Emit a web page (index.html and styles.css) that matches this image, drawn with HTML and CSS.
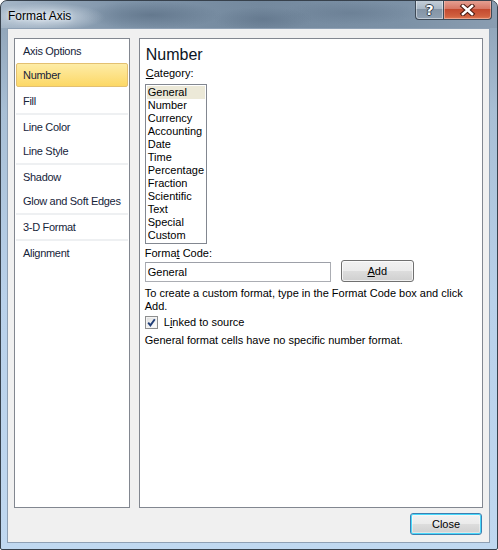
FILE: index.html
```html
<!DOCTYPE html>
<html>
<head>
<meta charset="utf-8">
<link rel="stylesheet" href="styles.css">
</head>
<body>
<div class="window">
  <div class="titlebar">
    <span class="title">Format Axis</span>
    <div class="caption-btns">
      <div class="cb help"><span class="q">?</span></div>
      <div class="cb close">
        <svg width="17" height="12" viewBox="0 0 17 12">
          <path d="M4 2 L13 10 M13 2 L4 10" stroke="#4a1a10" stroke-width="4.6" stroke-linecap="square" fill="none"/>
          <path d="M4 2 L13 10 M13 2 L4 10" stroke="#ffffff" stroke-width="2.6" stroke-linecap="square" fill="none"/>
        </svg>
      </div>
    </div>
  </div>
  <div class="client">
    <div class="panels">
      <ul class="nav">
        <li>Axis Options</li>
        <li class="sel">Number</li>
        <li>Fill</li>
        <li class="sep"></li>
        <li>Line Color</li>
        <li>Line Style</li>
        <li class="sep"></li>
        <li>Shadow</li>
        <li>Glow and Soft Edges</li>
        <li class="sep"></li>
        <li>3-D Format</li>
        <li class="sep"></li>
        <li>Alignment</li>
      </ul>
      <div class="content">
        <h1 class="heading">Number</h1>
        <div class="label cat"><u>C</u>ategory:</div>
        <div class="listbox">
          <div class="opt sel">General</div>
          <div class="opt">Number</div>
          <div class="opt">Currency</div>
          <div class="opt">Accounting</div>
          <div class="opt">Date</div>
          <div class="opt">Time</div>
          <div class="opt">Percentage</div>
          <div class="opt">Fraction</div>
          <div class="opt">Scientific</div>
          <div class="opt">Text</div>
          <div class="opt">Special</div>
          <div class="opt">Custom</div>
        </div>
        <div class="label fc">Forma<u>t</u> Code:</div>
        <div class="coderow">
          <div class="textbox">General</div>
          <div class="btn add"><u>A</u>dd</div>
        </div>
        <p class="note first">To create a custom format, type in the Format Code box and click<br>Add.</p>
        <div class="check">
          <span class="box">
            <svg width="11" height="11" viewBox="0 0 11 11">
              <path d="M2.2 5.6 L4.4 8.4 L8.8 2.2" stroke="#223f78" stroke-width="1.9" fill="none"/>
            </svg>
          </span>
          <span class="ctext">L<u>i</u>nked to source</span>
        </div>
        <p class="note last">General format cells have no specific number format.</p>
      </div>
    </div>
    <div class="footer">
      <div class="btn closebtn">Close</div>
    </div>
  </div>
</div>
</body>
</html>
```

FILE: styles.css
```css
html, body {
  margin: 0;
  padding: 0;
  background: #ffffff;
}

.window {
  width: 498px;
  height: 550px;
  box-sizing: border-box;
  border: 1px solid #37414c;
  border-radius: 7px 7px 2px 2px;
  background: linear-gradient(to bottom, #8ea1b4 0px, #93a7bb 28px, #a8bfd5 110px, #b9d1ea 300px, #c0d8f0 100%);
  display: flex;
  flex-direction: column;
  font-family: "Liberation Sans", Arial, sans-serif;
  overflow: hidden;
}

.titlebar {
  height: 27px;
  flex: none;
  display: flex;
  align-items: flex-start;
  background:
    radial-gradient(ellipse 60px 14px at 44px 16px, rgba(214,224,234,0.95), rgba(214,224,234,0) 100%),
    radial-gradient(ellipse 70px 14px at 150px 14px, rgba(80,100,122,0.55), rgba(80,100,122,0) 100%),
    radial-gradient(ellipse 50px 12px at 262px 18px, rgba(92,112,134,0.6), rgba(92,112,134,0) 100%),
    radial-gradient(ellipse 70px 12px at 350px 12px, rgba(96,116,138,0.5), rgba(96,116,138,0) 100%),
    linear-gradient(to right, #a5b6c7 0px, #7f94a9 120px, #74899e 260px, #7c91a6 400px, #8a9db1 100%);
  border-radius: 6px 6px 0 0;
}

.title {
  font-size: 12px;
  color: #000;
  padding: 8px 0 0 7px;
  line-height: 14px;
  text-shadow: 0 0 6px #e8eef4, 0 0 3px #e8eef4;
}

.caption-btns {
  margin-left: auto;
  margin-right: 5px;
  display: flex;
  margin-top: -1px;
}

.cb {
  height: 20px;
  box-sizing: border-box;
  display: flex;
  align-items: center;
  justify-content: center;
  border: 1px solid #3e4a57;
  border-top: none;
}

.help {
  width: 28px;
  border-right: none;
  border-radius: 0 0 0 4px;
  background: linear-gradient(to bottom, #c6d0da 0%, #aab8c6 45%, #8494a5 50%, #8fa0b2 100%);
  box-shadow: inset 0 0 0 1px rgba(255,255,255,0.45);
}

.q {
  font-family: "DejaVu Sans", sans-serif;
  font-weight: bold;
  font-size: 14px;
  line-height: 14px;
  color: #fff;
  text-shadow: -1px 0 #303c48, 1px 0 #303c48, 0 -1px #303c48, 0 1px #303c48;
}

.close {
  width: 49px;
  border-radius: 0 0 4px 0;
  background: linear-gradient(to bottom, #e6a497 0%, #d77866 45%, #c44a2f 50%, #d0603f 85%, #e07b55 100%);
  box-shadow: inset 0 0 0 1px rgba(255,220,210,0.45);
}

.client {
  margin: 0 7px 6px 6px;
  border: 1px solid #8ea0b4;
  background: #f0f0f0;
  flex: 1;
  display: flex;
  flex-direction: column;
  padding: 9px 6px 7px 6px;
  box-sizing: border-box;
}

.panels {
  display: flex;
  gap: 9px;
  height: 470px;
  flex: none;
}

.nav {
  list-style: none;
  margin: 0;
  padding: 0 1px;
  width: 116px;
  box-sizing: border-box;
  border: 1px solid #828790;
  background: #fff;
  font-size: 11px;
  letter-spacing: -0.3px;
  color: #16243a;
}

.nav li {
  height: 24px;
  box-sizing: border-box;
  padding: 0 0 0 6px;
  line-height: 22px;
  white-space: nowrap;
  border: 1px solid transparent;
}

.nav li.sel {
  background: linear-gradient(to bottom, #fdeca6 0%, #fde38a 45%, #fcd866 100%);
  border-color: #e3c071;
  border-radius: 2px;
  margin-bottom: 2px;
}

.nav li.sep {
  height: 2px;
  padding: 0;
  border: none;
  background: #eef0f2;
}

.content {
  width: 345px;
  box-sizing: border-box;
  border: 1px solid #828790;
  background: #fff;
  padding: 6px 5px 0 5px;
  font-size: 11px;
  color: #000;
}

.heading {
  margin: 0;
  font-weight: normal;
  font-size: 16px;
  line-height: 19px;
  padding-left: 1px;
  color: #0a1424;
}

.label {
  line-height: 13px;
}

.cat {
  margin-top: 3px;
  padding-left: 1px;
}

.listbox {
  margin-top: 4px;
  width: 62px;
  height: 160px;
  box-sizing: border-box;
  border: 1px solid #828790;
  padding: 1px 1px;
}

.opt {
  line-height: 13px;
  height: 13px;
  padding-left: 1px;
  white-space: nowrap;
}

.opt.sel {
  background: #ece9d8;
}

.fc {
  margin-top: 3px;
}

.coderow {
  display: flex;
  align-items: flex-start;
  margin-top: 0;
  height: 22px;
}

.textbox {
  margin-top: 2px;
  width: 186px;
  height: 20px;
  box-sizing: border-box;
  border: 1px solid #abadb3;
  border-top-color: #9da0a8;
  padding-left: 2px;
  line-height: 18px;
}

.btn {
  box-sizing: border-box;
  border: 1px solid #707070;
  border-radius: 3px;
  background: linear-gradient(to bottom, #f2f2f2 0%, #ebebeb 49%, #dddddd 50%, #cfcfcf 100%);
  box-shadow: inset 0 0 0 1px rgba(255,255,255,0.7);
  text-align: center;
  font-size: 11px;
  color: #000;
}

.add {
  margin-left: 10px;
  width: 73px;
  height: 22px;
  line-height: 20px;
}

.note {
  margin: 0;
  line-height: 13px;
}

.note.first {
  margin-top: 5px;
}

.check {
  margin-top: 3px;
  display: flex;
  align-items: flex-start;
  height: 13px;
}

.box {
  width: 13px;
  height: 13px;
  box-sizing: border-box;
  border: 1px solid #8e8f8f;
  background: linear-gradient(135deg, #dcdcdc 0%, #f4f4f4 60%, #ffffff 100%);
  box-shadow: inset 0 0 0 1px #f4f4f4;
  display: flex;
  align-items: center;
  justify-content: center;
}

.ctext {
  margin-left: 6px;
  line-height: 13px;
}

.note.last {
  margin-top: 5px;
}

.footer {
  display: flex;
  justify-content: flex-end;
  margin-top: 5px;
  padding-right: 1px;
}

.closebtn {
  width: 72px;
  height: 22px;
  line-height: 20px;
  border-color: #3c7fb1;
  box-shadow: inset 0 0 0 1px #48d8fb, inset 0 0 0 2px rgba(255,255,255,0.4);
}
```
